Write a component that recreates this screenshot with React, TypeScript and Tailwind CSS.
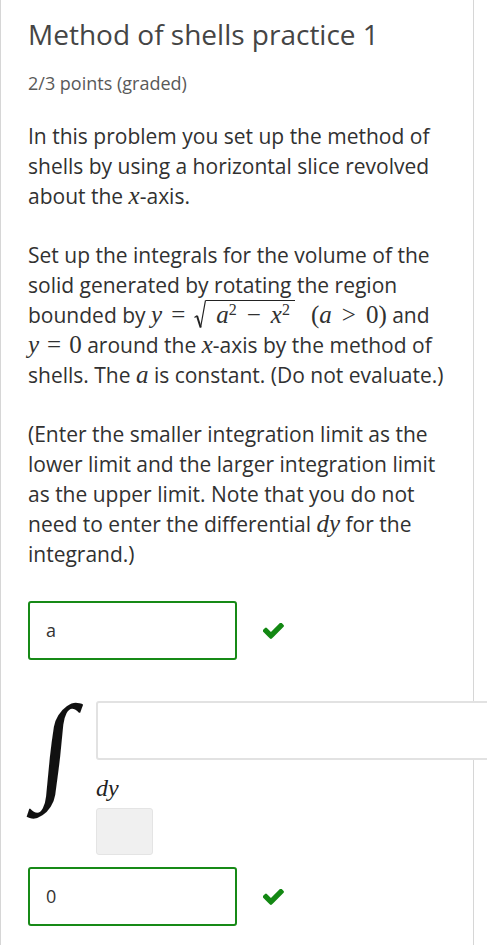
import React from "react";

const M = ({ children }: { children: React.ReactNode }) => (
  <span className="font-['Liberation_Serif',serif] italic text-[25px] leading-none">{children}</span>
);
const R = ({ children, className = "" }: { children: React.ReactNode; className?: string }) => (
  <span className={"font-['Liberation_Serif',serif] text-[25px] leading-none " + className}>{children}</span>
);
const Eq = ({ className = "mx-[8px]" }: { className?: string }) => (
  <span className={"font-['Liberation_Serif',serif] text-[25px] leading-none " + className}>=</span>
);

function Check() {
  return (
    <svg viewBox="137 360 1534 1170" className="ml-[26px] w-[21px] h-[16px]" fill="#138813">
      <path d="M1671 566q0 40-28 68l-724 724-136 136q-28 28-68 28t-68-28l-136-136-362-362q-28-28-28-68t28-68l136-136q28-28 68-28t68 28l294 295 656-657q28-28 68-28t68 28l136 136q28 28 28 68z" />
    </svg>
  );
}

function AnswerBox({ value }: { value: string }) {
  return (
    <div className="flex items-center">
      <div className="w-[209px] h-[59px] border-2 border-[#178a17] rounded-[3px] flex items-center pl-[16px] text-[18px] text-[#333]">
        {value}
      </div>
      <Check />
    </div>
  );
}

function Sqrt({ children }: { children: React.ReactNode }) {
  return (
    <span className="relative inline-block ml-[17px] border-t-[1.5px] border-[#222] pt-[1px] pl-[10px] pr-[5px] leading-[26px]">
      <svg viewBox="0 0 12 29" className="absolute left-[-12px] top-[-1.5px] w-[12px] h-[29px]" fill="none" stroke="#222">
        <path d="M0.5 17.5 L3 15.8" strokeWidth="1.2" />
        <path d="M3 15.8 L6.6 27.5" strokeWidth="2" />
        <path d="M6.6 27.5 L11.4 0.75 L12 0.75" strokeWidth="1.2" />
      </svg>
      {children}
    </span>
  );
}

export default function App() {
  return (
    <div className="w-[487px] h-[945px] overflow-hidden bg-white font-['Open_Sans',sans-serif]">
      <div className="w-[474px] min-h-[945px] border-x border-[#d6d6d6] pl-[27px]">
        <h2 className="pt-[16px] text-[28px] leading-[36px] text-[#454545]">
          Method of shells practice 1
        </h2>
        <div className="mt-[19px] text-[18px] leading-[24px] text-[#595959]">2/3 points (graded)</div>

        <div className="mt-[26px] text-[21px] leading-[30px] text-[#313131] whitespace-nowrap">
          <p>
            In this problem you set up the method of
            <br />
            shells by using a horizontal slice revolved
            <br />
            about the <M>x</M>-axis.
          </p>
          <p className="mt-[29px]">
            Set up the integrals for the volume of the
            <br />
            solid generated by rotating the region
            <br />
            bounded by <M>y</M>
            <Eq className="ml-[9px] mr-[4px]" />
            <Sqrt>
              <M>a</M>
              <sup className="font-['Liberation_Serif',serif] text-[16px]">2</sup>
              <R className="mx-[10px]">−</R>
              <M>x</M>
              <sup className="font-['Liberation_Serif',serif] text-[16px]">2</sup>
            </Sqrt>
            <span className="ml-[16px]">
              <R>(</R>
              <M>a</M>
              <R className="mx-[10px]">&gt;</R>
              <R>0)</R>
            </span>{" "}
            and
            <br />
            <M>y</M>
            <Eq />
            <R>0</R> around the <M>x</M>-axis by the method of
            <br />
            shells. The <M>a</M> is constant. (Do not evaluate.)
          </p>
          <p className="mt-[29px]">
            (Enter the smaller integration limit as the
            <br />
            lower limit and the larger integration limit
            <br />
            as the upper limit. Note that you do not
            <br />
            need to enter the differential <M>dy</M> for the
            <br />
            integrand.)
          </p>
        </div>

        <div className="mt-[32px]">
          <AnswerBox value="a" />
        </div>

        <div className="mt-[41px] flex">
          <div className="w-[68px] h-[120px] relative shrink-0">
            <span className="absolute left-[12px] top-[-12px] font-['Liberation_Serif',serif] text-[118px] leading-none text-[#111] origin-center -skew-x-[6deg]">
              ∫
            </span>
          </div>
          <div className="flex flex-col shrink-0">
            <div className="w-[420px] h-[59px] border-2 border-[#e2e2e2] rounded-[3px] bg-white" />
            <div className="mt-[16px] font-['Liberation_Serif',serif] italic text-[24px] leading-[24px] text-[#222]">dy</div>
            <div className="mt-[8px] w-[57px] h-[47px] bg-[#f0f0f0] border border-[#e4e4e4] rounded-[3px]" />
          </div>
        </div>

        <div className="mt-[12px]">
          <AnswerBox value="0" />
        </div>
      </div>
    </div>
  );
}
